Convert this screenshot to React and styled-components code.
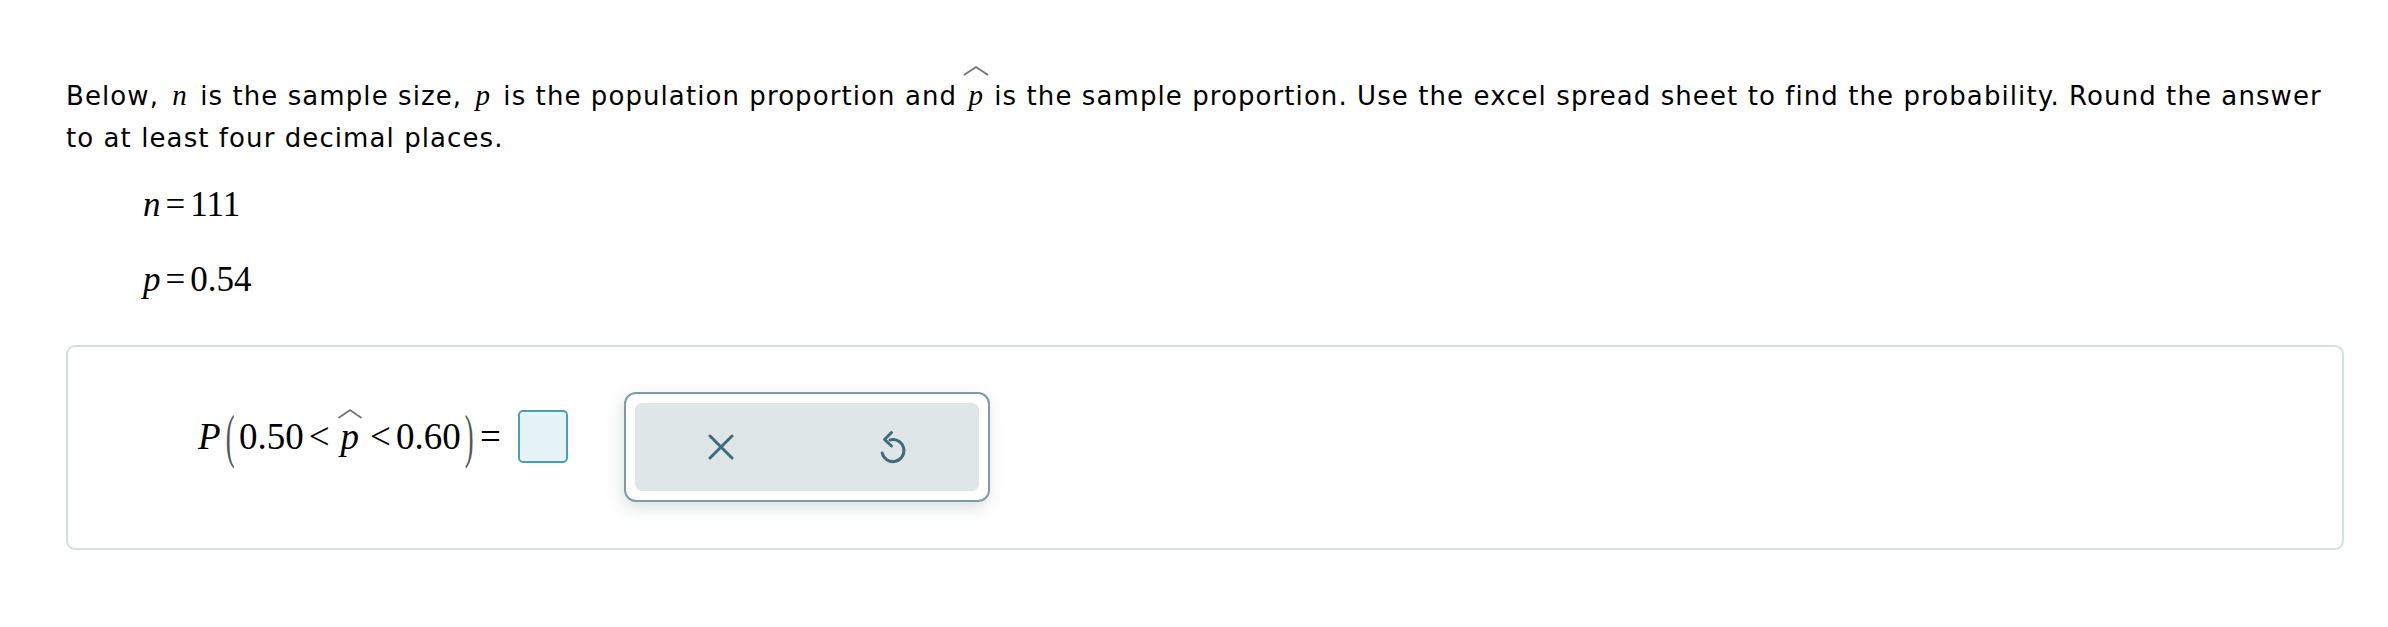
import React from "react";
import styled, { createGlobalStyle } from "styled-components";

const GlobalStyle = createGlobalStyle`
  html, body {
    margin: 0;
    padding: 0;
    background: #fff;
  }
  body {
    font-family: "DejaVu Sans", Verdana, sans-serif;
    color: #000;
  }
`;

const Page = styled.div`
  padding: 74px 44px 0 66px;
`;

const Prompt = styled.p`
  margin: 0;
  font-size: 26px;
  line-height: 42px;
  letter-spacing: 1.08px;
`;

const Var = styled.span`
  position: relative;
  font-family: "Liberation Serif", "Times New Roman", serif;
  font-style: italic;
  letter-spacing: 0;
  font-size: ${(p) => p.size || 29}px;
  padding: 0 ${(p) => p.pad || 4}px;
`;

const Hat = styled.svg`
  position: absolute;
  left: 50%;
  top: ${(p) => p.top}px;
  transform: translateX(-50%);
  overflow: visible;
`;

const Given = styled.div`
  padding-left: 77px;
  margin-top: 27px;
  display: flex;
  flex-direction: column;
  gap: 37px;
  font-family: "Liberation Serif", "Times New Roman", serif;
  font-size: 35px;
  line-height: 38px;
`;

const Eq = styled.div`
  display: flex;
  align-items: baseline;
`;

const Op = styled.span`
  padding: 0 ${(p) => p.pad || 4}px;
`;

const Card = styled.div`
  margin-top: 46px;
  height: 201px;
  border: 2px solid #d6dfe1;
  border-radius: 9px;
  display: flex;
  align-items: center;
  padding-left: 130px;
`;

const Expr = styled.div`
  display: flex;
  align-items: center;
  margin-bottom: 22px;
  font-family: "Liberation Serif", "Times New Roman", serif;
  font-size: 37px;
  line-height: 40px;
`;

const Paren = styled.span`
  display: inline-block;
  color: #555;
  transform: scale(0.72, 1.6);
  margin: 0 ${(p) => p.m || 2}px;
`;

const AnswerBox = styled.div`
  width: 46px;
  height: 49px;
  margin-left: 14px;
  border: 2px solid #4aa0b0;
  border-radius: 5px;
  background: #e6f4f8;
`;

const Tools = styled.div`
  margin-left: 56px;
  margin-top: -2px;
  width: 344px;
  padding: 9px;
  border: 2px solid #7f9ca5;
  border-radius: 12px;
  background: #fff;
  box-shadow: -2px 6px 16px rgba(40, 70, 80, 0.16);
  display: flex;
`;

const ToolRow = styled.div`
  flex: 1;
  height: 88px;
  display: flex;
  background: #dfe6e8;
  border-radius: 7px;
`;

const ToolButton = styled.button`
  flex: 1;
  border: none;
  background: transparent;
  display: flex;
  align-items: center;
  justify-content: center;
  padding: 0;
  cursor: pointer;
  color: #3f6c79;
`;

const HatMark = ({ w = 26, h = 10, top = -9 }) => (
  <Hat width={w} height={h} top={top} viewBox={`0 0 ${w} ${h}`}>
    <polyline
      points={`1,${h - 1} ${w / 2},1 ${w - 1},${h - 1}`}
      fill="none"
      stroke="#6f6f6f"
      strokeWidth="1.6"
    />
  </Hat>
);

const CloseIcon = () => (
  <svg width="26" height="26" viewBox="0 0 26 26">
    <path
      d="M2 2 L24 24 M24 2 L2 24"
      stroke="currentColor"
      strokeWidth="3"
      strokeLinecap="round"
      fill="none"
    />
  </svg>
);

const UndoIcon = () => (
  <svg width="30" height="36" viewBox="-15 -22 30 36">
    <path
      d="M-3 -11 A 11 11 0 1 1 -10.8 2"
      stroke="currentColor"
      strokeWidth="3"
      strokeLinecap="round"
      fill="none"
    />
    <path
      d="M-1.5 -18.5 L-8.5 -11.5 L-1.5 -5"
      stroke="currentColor"
      strokeWidth="3"
      strokeLinecap="round"
      strokeLinejoin="round"
      fill="none"
    />
  </svg>
);

export default function App() {
  return (
    <>
      <GlobalStyle />
      <Page>
        <Prompt>
          Below, <Var>n</Var> is the sample size, <Var>p</Var> is the
          population proportion and{" "}
          <Var pad={2}>
            p<HatMark top={-13} />
          </Var>{" "}
          is the sample proportion. Use the excel spread sheet to find the
          probability. Round the answer to at least four decimal places.
        </Prompt>

        <Given>
          <Eq>
            <i>n</i>
            <Op pad={5}>=</Op>111
          </Eq>
          <Eq>
            <i>p</i>
            <Op pad={5}>=</Op>0.54
          </Eq>
        </Given>

        <Card>
          <Expr>
            <i>P</i>
            <Paren m={3}>(</Paren>
            0.50
            <Op pad={5}>&lt;</Op>
            <Var size={37} pad={6}>
              p<HatMark w={25} h={10} top={-8} />
            </Var>
            <Op pad={5}>&lt;</Op>
            0.60
            <Paren m={2}>)</Paren>
            <Op pad={3}>=</Op>
            <AnswerBox />
          </Expr>
          <Tools>
            <ToolRow>
              <ToolButton aria-label="Clear">
                <CloseIcon />
              </ToolButton>
              <ToolButton aria-label="Undo">
                <UndoIcon />
              </ToolButton>
            </ToolRow>
          </Tools>
        </Card>
      </Page>
    </>
  );
}
